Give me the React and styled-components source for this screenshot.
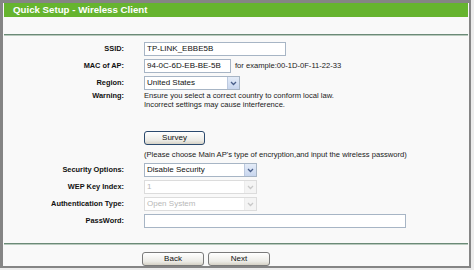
import React from "react";
import styled, { createGlobalStyle, css } from "styled-components";

const Global = createGlobalStyle`
  html, body { margin: 0; padding: 0; background: #ececec; }
  body { font-family: "Liberation Sans", Arial, sans-serif; }
  * { box-sizing: border-box; }
`;

const Frame = styled.div`
  width: 471px;
  height: 268px;
  border-style: solid;
  border-color: #858585;
  border-width: 3px 2px 2px 3px;
  background: #f9f9f9;
  padding: 0 1px 0 1px;
  display: flex;
  flex-direction: column;
  overflow: hidden;
`;

const Header = styled.div`
  flex: none;
  height: 14px;
  background: #66b42f;
  color: #fff;
  font-weight: bold;
  font-size: 9.7px;
  line-height: 14px;
  padding-left: 9px;
  white-space: nowrap;
`;

const Rule = styled.div`
  flex: none;
  height: 2px;
  border-top: 1px solid #6b8a77;
  border-bottom: 1px solid #b9cabe;
  margin-top: ${(p) => p.$top}px;
`;

const Form = styled.div`
  display: grid;
  grid-template-columns: 120px 1fr;
  column-gap: 20px;
  row-gap: 3px;
  margin-top: 6px;
  align-items: center;
`;

const Label = styled.div`
  text-align: right;
  font-weight: bold;
  font-size: 7.4px;
  color: #111;
  white-space: nowrap;
  align-self: ${(p) => (p.$top ? "start" : "center")};
  line-height: ${(p) => (p.$top ? "9px" : "10px")};
  margin-top: ${(p) => p.$mt || 0}px;
`;

const Field = styled.div`
  display: flex;
  align-items: center;
  gap: 4px;
  height: ${(p) => (p.$auto ? "auto" : "14px")};
  margin-top: ${(p) => p.$mt || 0}px;
`;

const Text = styled.div`
  font-size: 7.6px;
  line-height: ${(p) => p.$lh || 10}px;
  color: #1a1a1a;
  white-space: nowrap;
`;

const Input = styled.div`
  width: ${(p) => p.$w}px;
  height: 14px;
  border: 1px solid #a7b5c5;
  background: #fff;
  font-size: 8px;
  line-height: 12px;
  padding-left: 2px;
  color: #111;
  white-space: nowrap;
`;

const Select = styled.div`
  width: ${(p) => p.$w}px;
  height: 14px;
  border: 1px solid ${(p) => (p.$disabled ? "#dcdcdc" : "#a7b5c5")};
  background: #fff;
  display: flex;
  font-size: 8px;
  line-height: 12px;
  color: ${(p) => (p.$disabled ? "#b8b8b8" : "#111")};
`;

const SelectText = styled.div`
  flex: 1;
  padding-left: 2px;
  white-space: nowrap;
`;

const Arrow = styled.div`
  width: 12px;
  height: 12px;
  display: flex;
  align-items: center;
  justify-content: center;
  ${(p) =>
    p.$disabled
      ? css`background: #f4f4f4; border-left: 1px solid #ececec;`
      : css`background: linear-gradient(#e4ecf8, #c8d6ee); border-left: 1px solid #bcc9df;`}
`;

const Btn = styled.div`
  width: ${(p) => p.$w}px;
  height: 14px;
  border: 1px solid ${(p) => (p.$dark ? "#2c4a6e" : "#7a7a7a")};
  border-radius: 3px;
  background: linear-gradient(#ffffff, #ecebe6 70%, #d6d2c6);
  font-size: 8px;
  line-height: 12px;
  text-align: center;
  color: #111;
`;

const Footer = styled.div`
  flex: none;
  display: flex;
  gap: 4px;
  padding-left: 138px;
  margin-top: 7px;
`;

const Chevron = ({ disabled }) => (
  <svg width="7" height="5" viewBox="0 0 7 5">
    <path d="M1 1 L3.5 3.5 L6 1" fill="none" stroke={disabled ? "#c8c8c8" : "#4a5f8a"} strokeWidth="1.3" />
  </svg>
);

const Dropdown = ({ w, value, disabled }) => (
  <Select $w={w} $disabled={disabled}>
    <SelectText>{value}</SelectText>
    <Arrow $disabled={disabled}>
      <Chevron disabled={disabled} />
    </Arrow>
  </Select>
);

export default function App() {
  return (
    <>
      <Global />
      <Frame>
        <Header>Quick Setup - Wireless Client</Header>
        <Rule $top={17} />
        <Form>
          <Label>SSID:</Label>
          <Field><Input $w={142}>TP-LINK_EBBE5B</Input></Field>

          <Label>MAC of AP:</Label>
          <Field>
            <Input $w={87}>94-0C-6D-EB-BE-5B</Input>
            <Text>for example:00-1D-0F-11-22-33</Text>
          </Field>

          <Label>Region:</Label>
          <Field><Dropdown w={96} value="United States" /></Field>

          <Label $top $mt={-2}>Warning:</Label>
          <Field $auto $mt={-2}>
            <Text $lh={9}>
              Ensure you select a correct country to conform local law.
              <br />
              Incorrect settings may cause interference.
            </Text>
          </Field>

          <div />
          <Field $mt={19}><Btn $w={61} $dark>Survey</Btn></Field>

          <div />
          <Field $auto $mt={2}>
            <Text>(Please choose Main AP's type of encryption,and input the wireless password)</Text>
          </Field>

          <Label>Security Options:</Label>
          <Field><Dropdown w={113} value="Disable Security" /></Field>

          <Label>WEP Key Index:</Label>
          <Field><Dropdown w={113} value="1" disabled /></Field>

          <Label>Authentication Type:</Label>
          <Field><Dropdown w={113} value="Open System" disabled /></Field>

          <Label>PassWord:</Label>
          <Field><Input $w={262} /></Field>
        </Form>
        <Rule $top={15} />
        <Footer>
          <Btn $w={62}>Back</Btn>
          <Btn $w={62}>Next</Btn>
        </Footer>
      </Frame>
    </>
  );
}
